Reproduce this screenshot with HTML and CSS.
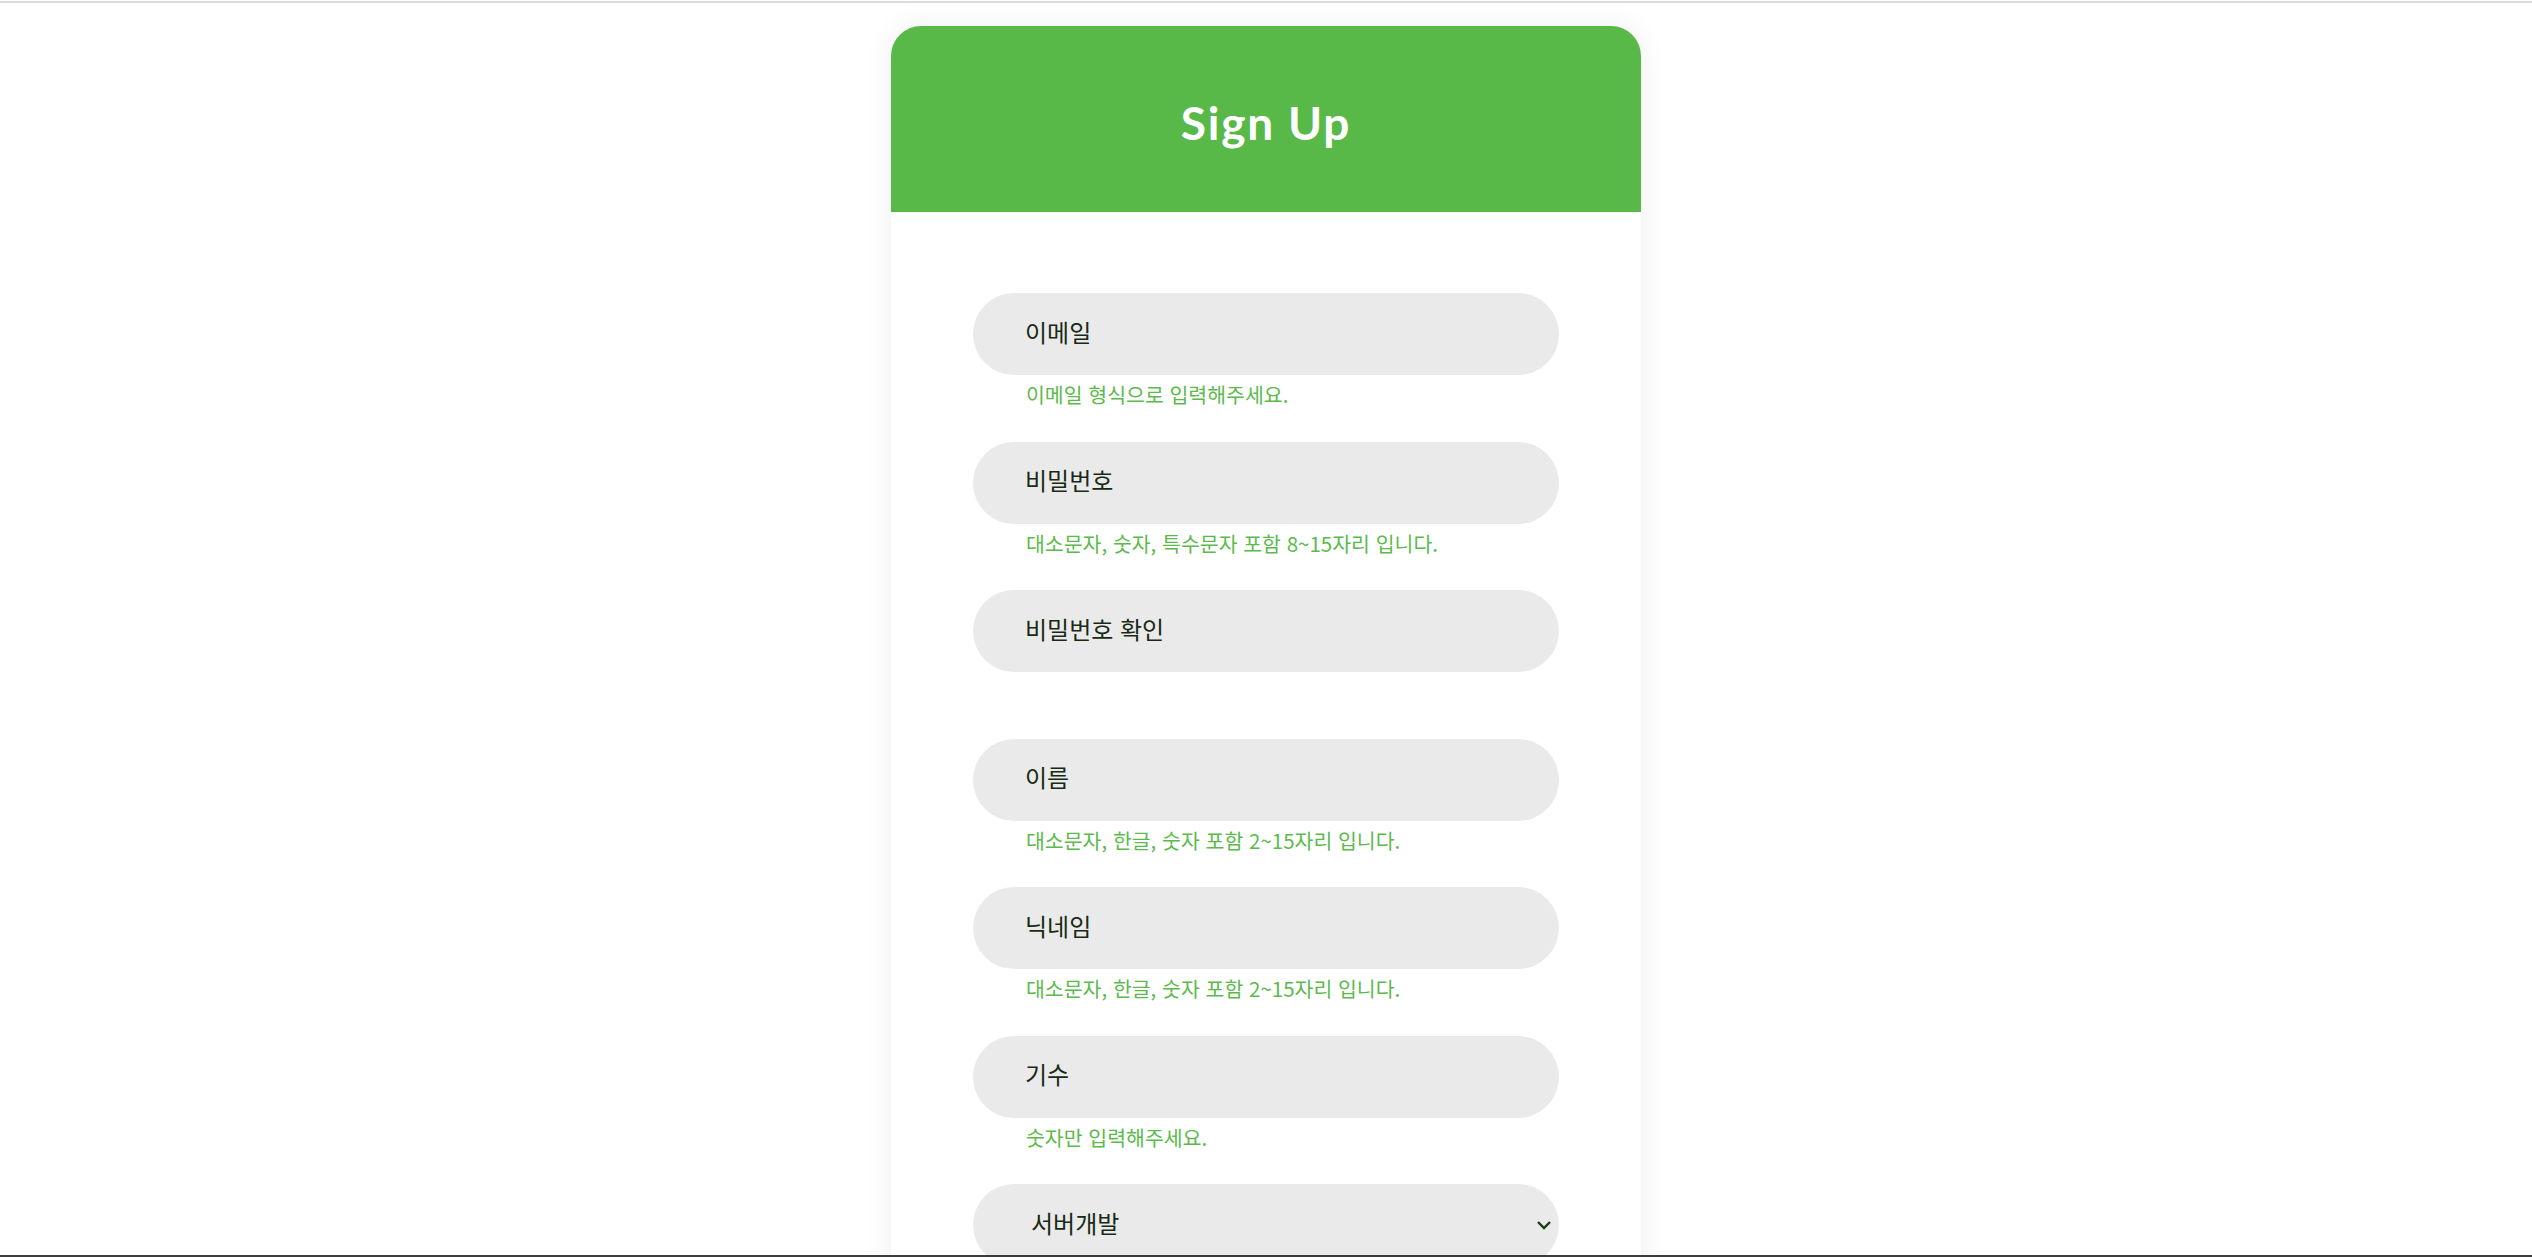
FILE: index.html
```html
<!DOCTYPE html>
<html lang="ko">
<head>
<meta charset="utf-8">
<title>Sign Up</title>
<link rel="stylesheet" href="styles.css">
</head>
<body>
<div class="topline"></div>
<main class="page">
  <section class="card">
    <header class="card-header">
      <h1 class="title">Sign Up</h1>
    </header>
    <form class="form">
      <div class="field">
        <input class="input" type="email" placeholder="이메일">
        <p class="hint">이메일 형식으로 입력해주세요.</p>
      </div>
      <div class="field">
        <input class="input" type="password" placeholder="비밀번호">
        <p class="hint">대소문자, 숫자, 특수문자 포함 8~15자리 입니다.</p>
      </div>
      <div class="field">
        <input class="input" type="password" placeholder="비밀번호 확인">
        <p class="hint"></p>
      </div>
      <div class="field">
        <input class="input" type="text" placeholder="이름">
        <p class="hint">대소문자, 한글, 숫자 포함 2~15자리 입니다.</p>
      </div>
      <div class="field">
        <input class="input" type="text" placeholder="닉네임">
        <p class="hint">대소문자, 한글, 숫자 포함 2~15자리 입니다.</p>
      </div>
      <div class="field">
        <input class="input" type="text" placeholder="기수">
        <p class="hint">숫자만 입력해주세요.</p>
      </div>
      <div class="field select-field">
        <select class="input select">
          <option>서버개발</option>
          <option>프론트엔드</option>
          <option>디자인</option>
        </select>
        <svg class="chevron" width="16" height="10" viewBox="0 0 16 10" aria-hidden="true">
          <path d="M2 2 L8 8 L14 2" fill="none" stroke="#1e3a1a" stroke-width="2.4" stroke-linecap="butt"/>
        </svg>
        <p class="hint"></p>
      </div>
    </form>
  </section>
</main>
<div class="bottomline"></div>
</body>
</html>
```

FILE: styles.css
```css
html, body {
  margin: 0;
  padding: 0;
  background: #ffffff;
}

body {
  font-family: "Noto Sans CJK KR", "Noto Sans", sans-serif;
}

.topline {
  margin-top: 1px;
  height: 2px;
  background: #dcdcdc;
}

.bottomline {
  position: fixed;
  left: 0;
  right: 0;
  bottom: 0;
  height: 2px;
  background: #3c3c3c;
}

.page {
  display: flex;
  justify-content: center;
  padding-top: 23px;
}

.card {
  width: 750px;
  background: #ffffff;
  border-radius: 30px 30px 0 0;
  box-shadow: 0 0 30px rgba(0, 0, 0, 0.07);
  overflow: hidden;
}

.card-header {
  height: 186px;
  background: #58b949;
  display: flex;
  align-items: center;
  justify-content: center;
}

.title {
  margin: 0;
  font-family: "Lato", "Open Sans", sans-serif;
  font-weight: 700;
  font-size: 46px;
  line-height: 1;
  color: #ffffff;
  letter-spacing: 1.8px;
  padding-top: 8px;
}

.form {
  padding: 81px 82px 40px;
  display: flex;
  flex-direction: column;
}

.field {
  display: flex;
  flex-direction: column;
}

.select-field {
  position: relative;
}

.input {
  box-sizing: border-box;
  width: 100%;
  height: 82px;
  border: none;
  outline: none;
  border-radius: 41px;
  background: #eaeaea;
  padding: 0 52px 6px;
  font-family: "Noto Sans CJK KR", "Noto Sans", sans-serif;
  font-size: 24px;
  color: #182a15;
}

.input::placeholder {
  color: #182a15;
  opacity: 1;
}

.select {
  appearance: none;
  -webkit-appearance: none;
  padding-left: 58px;
}

.chevron {
  position: absolute;
  left: 563px;
  top: 36px;
}

.hint {
  box-sizing: border-box;
  margin: 0;
  height: 66.5px;
  padding: 6px 0 0 53px;
  font-family: "Noto Sans CJK KR", "Noto Sans", sans-serif;
  font-size: 20.5px;
  line-height: 26px;
  color: #5cba4c;
}
```
